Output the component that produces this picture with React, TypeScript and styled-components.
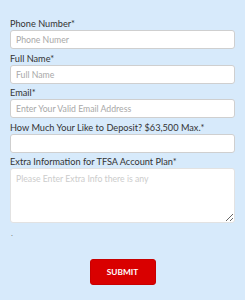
import React from "react";
import styled, { createGlobalStyle } from "styled-components";

const Global = createGlobalStyle`
  html, body { margin: 0; padding: 0; background: #d7eafb; }
  body { font-family: Lato, "Liberation Sans", sans-serif; }
`;

const Form = styled.form`
  padding: 17px 10px 0 10px;
  display: flex;
  flex-direction: column;
  width: 245px;
  height: 300px;
  box-sizing: border-box;
`;

const Group = styled.div`
  display: flex;
  flex-direction: column;
  margin-bottom: 2.5px;
`;

const Label = styled.label`
  font-size: 9.2px;
  line-height: 13px;
  color: #333;
  white-space: nowrap;
`;

const Input = styled.input`
  box-sizing: border-box;
  height: 19px;
  width: 100%;
  border: 1px solid #cfcfcf;
  border-radius: 3px;
  background: #fff;
  padding: 0 5px;
  font-family: Lato, "Liberation Sans", sans-serif;
  font-size: 8.7px;
  outline: none;
  &::placeholder { color: #a8a8a8; }
`;

const Area = styled.textarea`
  box-sizing: border-box;
  height: 55px;
  width: 100%;
  border: 1px solid #e2e2e2;
  border-radius: 3px;
  background: #fff;
  padding: 4px 5px;
  font-family: Lato, "Liberation Sans", sans-serif;
  font-size: 8.7px;
  outline: none;
  resize: vertical;
  display: block;
  &::placeholder { color: #cccccc; }
`;

const Dot = styled.div`
  font-size: 8px;
  line-height: 8px;
  color: #777;
  margin: 3px 0 0 1px;
`;

const ButtonRow = styled.div`
  display: flex;
  justify-content: center;
  margin-top: 22px;
`;

const Submit = styled.button`
  width: 66px;
  height: 26px;
  background: #d90000;
  color: #fff;
  border: 1px solid #c80000;
  border-radius: 3px;
  font-family: Lato, "Liberation Sans", sans-serif;
  font-weight: 700;
  font-size: 8.3px;
  cursor: pointer;
`;

export default function App() {
  return (
    <>
      <Global />
      <Form onSubmit={(e) => e.preventDefault()}>
        <Group>
          <Label>Phone Number*</Label>
          <Input placeholder="Phone Numer" />
        </Group>
        <Group>
          <Label>Full Name*</Label>
          <Input placeholder="Full Name" />
        </Group>
        <Group>
          <Label>Email*</Label>
          <Input placeholder="Enter Your Valid Email Address" />
        </Group>
        <Group>
          <Label>How Much Your Like to Deposit? $63,500 Max.*</Label>
          <Input />
        </Group>
        <Group>
          <Label>Extra Information for TFSA Account Plan*</Label>
          <Area placeholder="Please Enter Extra Info there is any" />
        </Group>
        <Dot>.</Dot>
        <ButtonRow>
          <Submit type="submit">SUBMIT</Submit>
        </ButtonRow>
      </Form>
    </>
  );
}
